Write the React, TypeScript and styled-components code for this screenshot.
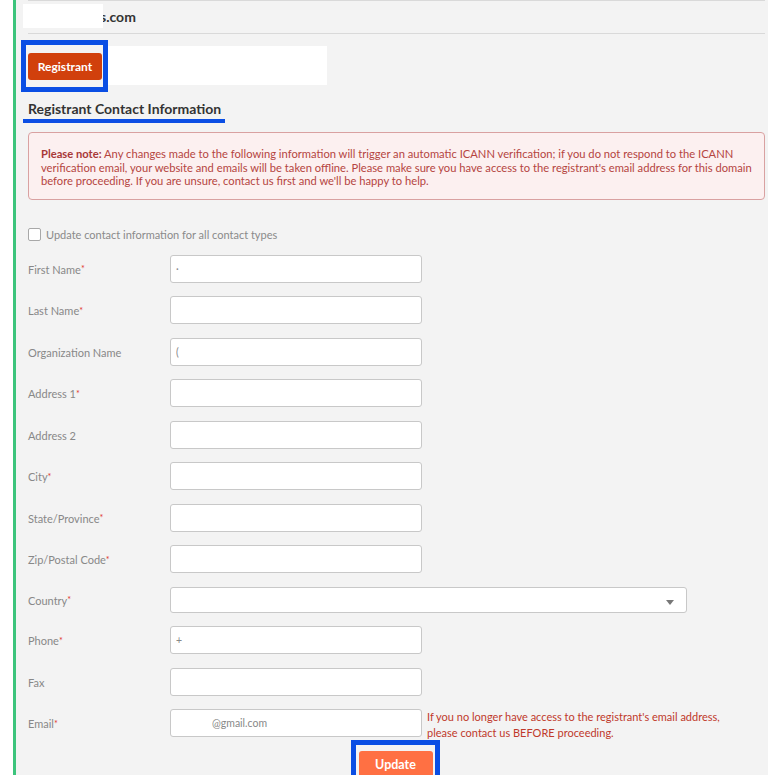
import styled, { createGlobalStyle } from "styled-components";

const GlobalStyle = createGlobalStyle`
  html, body {
    margin: 0;
    padding: 0;
    background: #ffffff;
    font-family: "Lato", "Open Sans", sans-serif;
  }
  * { box-sizing: border-box; }
`;

const Panel = styled.div`
  margin-left: 13px;
  border-left: 3px solid #3cc47c;
  background: #f3f3f3;
  padding: 0 3px 0 12px;
  height: 775px;
`;

const DomainBar = styled.div`
  position: relative;
  height: 34px;
  border-top: 1px solid #d9d9d9;
  border-bottom: 1px solid #d9d9d9;
  display: flex;
  align-items: center;
  padding-left: 72px;
  padding-bottom: 2px;
  font-size: 14px;
  font-weight: 700;
  color: #333;
`;

const Redact = styled.div<{ $w: number; $h: number; $top: number; $left: number }>`
  position: absolute;
  background: #ffffff;
  width: ${(p) => p.$w}px;
  height: ${(p) => p.$h}px;
  top: ${(p) => p.$top}px;
  left: ${(p) => p.$left}px;
`;

const TabRow = styled.div`
  position: relative;
  height: 80px;
  margin-top: -34px;
  padding-top: 53px;
`;

const Highlight = styled.div<{ $inset: string }>`
  position: absolute;
  inset: ${(p) => p.$inset};
  border: 5px solid #0a4ee4;
  pointer-events: none;
`;

const TabButton = styled.button`
  position: relative;
  height: 27px;
  width: 74px;
  padding: 0;
  border: none;
  border-radius: 3px;
  background: #d1400c;
  color: #fff;
  font-family: "Lato", sans-serif;
  font-weight: 700;
  font-size: 12px;
  display: block;
`;

const Heading = styled.h2`
  position: relative;
  margin: 20px 0 0 0;
  font-size: 14px;
  line-height: 18px;
  font-weight: 700;
  color: #333;
`;

const Underline = styled.span`
  position: absolute;
  left: -5px;
  width: 202px;
  top: 19px;
  height: 4px;
  background: #0a4ee4;
`;

const Note = styled.div`
  margin-top: 14px;
  background: #fcf0f0;
  border: 1px solid #d9a1a1;
  border-radius: 4px;
  padding: 14px 12px 11px 12px;
  font-size: 11.2px;
  line-height: 13.6px;
  color: #b5453f;

  b {
    color: #a83838;
    font-weight: 700;
  }
`;

const CheckRow = styled.label`
  display: flex;
  align-items: center;
  gap: 5px;
  margin-top: 28px;
  font-size: 11px;
  color: #8a8a8a;
  height: 14px;
`;

const CheckBox = styled.span`
  width: 13px;
  height: 13px;
  border: 1px solid #a8a8a8;
  border-radius: 2px;
  background: #fff;
`;

const Form = styled.div`
  margin-top: 13px;
  display: flex;
  flex-direction: column;
  gap: 13.5px;
`;

const Row = styled.div`
  display: flex;
  align-items: flex-start;
`;

const Label = styled.div<{ $h?: number }>`
  width: 142px;
  flex: none;
  height: ${(p) => p.$h ?? 28}px;
  display: flex;
  align-items: center;
  padding-top: 1px;
  font-size: 11px;
  color: #888;

  sup {
    color: #e0332b;
    font-size: 9px;
    line-height: 0;
    vertical-align: 3px;
  }
`;

const Input = styled.input<{ $w?: number; $indent?: number }>`
  width: ${(p) => p.$w ?? 252}px;
  height: 28px;
  border: 1px solid #c8c8c8;
  border-radius: 3px;
  background: #fff;
  font-family: "Lato", sans-serif;
  font-size: 10.5px;
  color: #888;
  padding: 0 0 0 ${(p) => p.$indent ?? 5}px;
  outline: none;
`;

const Select = styled.div`
  position: relative;
  width: 517px;
  height: 26px;
  border: 1px solid #c8c8c8;
  border-radius: 3px;
  background: #fff;
`;

const Caret = styled.span`
  position: absolute;
  right: 12px;
  top: 12px;
  width: 0;
  height: 0;
  border-left: 4.5px solid transparent;
  border-right: 4.5px solid transparent;
  border-top: 5px solid #777;
`;

const Help = styled.div`
  margin-left: 5px;
  font-size: 11px;
  line-height: 16px;
  color: #c0392b;
`;

const Actions = styled.div`
  margin-top: 10px;
  display: flex;
  justify-content: center;
  padding-right: 2px;
`;

const UpdateWrap = styled.div`
  position: relative;
`;

const UpdateButton = styled.button`
  display: block;
  width: 74px;
  height: 27px;
  border: none;
  border-radius: 3px;
  background: #ff7043;
  color: #fff;
  font-family: "Lato", sans-serif;
  font-weight: 700;
  font-size: 12.5px;
  padding: 0;
`;

type Field = { label: string; required?: boolean; value?: string };

const fields: Field[] = [
  { label: "First Name", required: true, value: "·" },
  { label: "Last Name", required: true },
  { label: "Organization Name", value: "(" },
  { label: "Address 1", required: true },
  { label: "Address 2" },
  { label: "City", required: true },
  { label: "State/Province", required: true },
  { label: "Zip/Postal Code", required: true },
];

const lower: Field[] = [
  { label: "Phone", required: true, value: "+" },
  { label: "Fax" },
];

const FieldLabel = ({ f, h }: { f: Field; h?: number }) => (
  <Label $h={h}>
    {f.label}
    {f.required && <sup>*</sup>}
  </Label>
);

export default function App() {
  return (
    <>
      <GlobalStyle />
      <Panel>
        <DomainBar>
          <Redact $w={80} $h={24} $top={3} $left={-5} />
          s.com
        </DomainBar>
        <TabRow>
          <Redact $w={219} $h={39} $top={46} $left={80} />
          <TabButton>Registrant</TabButton>
          <Highlight $inset="40px auto auto -7px" style={{ width: 87, height: 52 }} />
        </TabRow>
        <Heading>
          Registrant Contact Information
          <Underline />
        </Heading>
        <Note>
          <b>Please note:</b> Any changes made to the following information will trigger an
          automatic ICANN verification; if you do not respond to the ICANN verification email,
          your website and emails will be taken offline. Please make sure you have access to the
          registrant's email address for this domain before proceeding. If you are unsure, contact
          us first and we'll be happy to help.
        </Note>
        <CheckRow>
          <CheckBox />
          Update contact information for all contact types
        </CheckRow>
        <Form>
          {fields.map((f) => (
            <Row key={f.label}>
              <FieldLabel f={f} />
              <Input readOnly value={f.value ?? ""} />
            </Row>
          ))}
          <Row>
            <FieldLabel f={{ label: "Country", required: true }} h={26} />
            <Select>
              <Caret />
            </Select>
          </Row>
          {lower.map((f) => (
            <Row key={f.label}>
              <FieldLabel f={f} />
              <Input readOnly value={f.value ?? ""} />
            </Row>
          ))}
          <Row>
            <FieldLabel f={{ label: "Email", required: true }} />
            <Input readOnly value="@gmail.com" $indent={41} />
            <Help>
              If you no longer have access to the registrant's email address,
              <br />
              please contact us BEFORE proceeding.
            </Help>
          </Row>
        </Form>
        <Actions>
          <UpdateWrap>
            <UpdateButton>Update</UpdateButton>
            <Highlight $inset="-11px -7px -7px -8px" />
          </UpdateWrap>
        </Actions>
      </Panel>
    </>
  );
}
